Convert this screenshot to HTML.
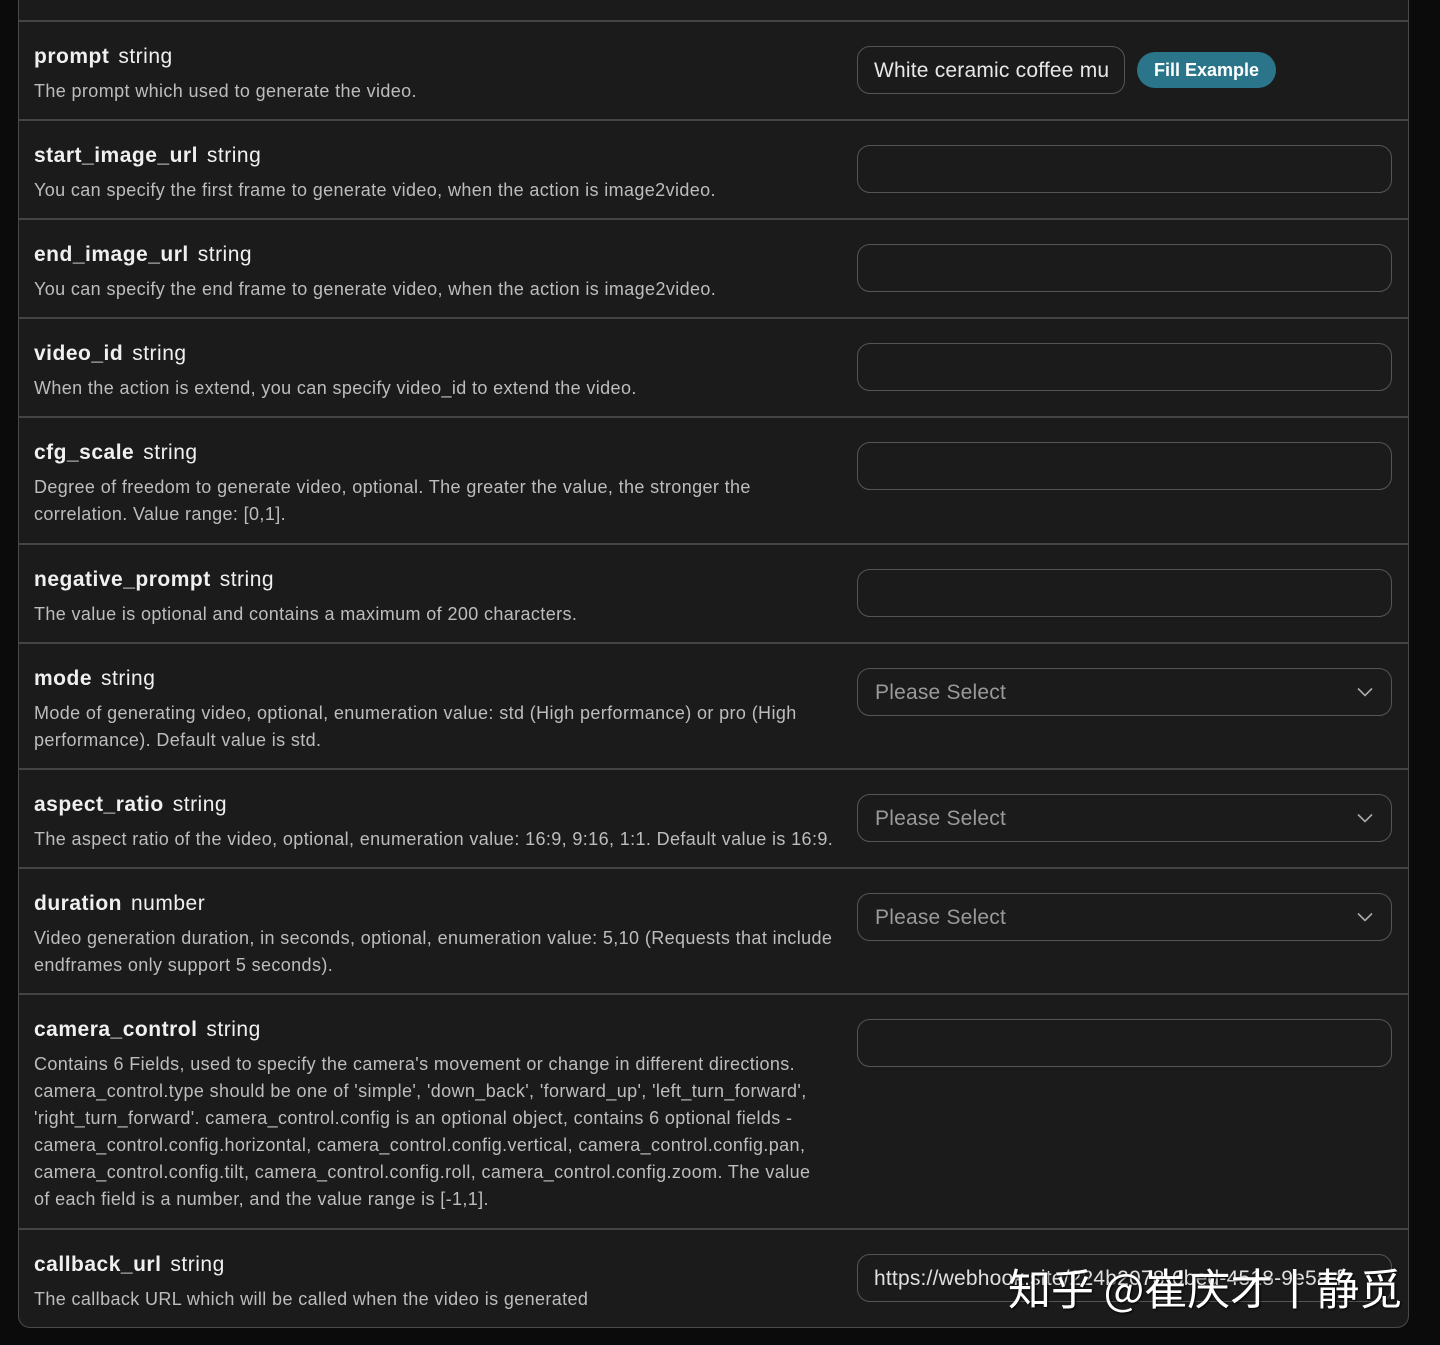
<!DOCTYPE html>
<html><head><meta charset="utf-8"><style>
*{box-sizing:border-box;margin:0;padding:0}
body{width:1440px;height:1345px;background:#0b0b0b;font-family:"Liberation Sans","Noto Sans CJK SC",sans-serif;overflow:hidden;position:relative}
.panel{position:absolute;left:18px;top:-12px;width:1391px;height:1340px;background:#1b1b1b;border:1.5px solid #4a4a4a;border-radius:12px;overflow:hidden}
.row{position:absolute;left:0;right:0;border-top:2px solid #444}
.name{position:absolute;left:15px;top:23px;font-size:21px;letter-spacing:0.5px;color:#f0f0f0;white-space:nowrap}
.name b{font-weight:700;margin-right:9px}
.desc{position:absolute;left:15px;top:56px;font-size:18px;letter-spacing:0.38px;line-height:27px;color:#bdbdbd;white-space:nowrap}
.inp{position:absolute;left:838px;top:24px;width:535px;height:48px;border:1.5px solid #555;border-radius:13px;font-size:21px;letter-spacing:0.2px;color:#9a9a9a;padding:12px 17px;white-space:nowrap;overflow:hidden}
.sel svg{position:absolute;right:18px;top:18px}
.btn{position:absolute;left:1118px;top:30px;width:139px;height:36px;border-radius:18px;background:#2a7589;color:#fff;font-weight:700;font-size:18px;text-align:center;line-height:36px}
</style></head><body>
<div class="panel">
<div class="row" style="top:31px;height:99px"><div class="name"><b>prompt</b>string</div><div class="desc">The prompt which used to generate the video.</div>
<div class="inp" style="width:268px;color:#e8e8e8;padding-left:16px;padding-right:14px"><div style="overflow:hidden;width:235px">White ceramic coffee mug</div></div><div class="btn">Fill Example</div></div>
<div class="row" style="top:130px"><div class="name"><b>start_image_url</b>string</div><div class="desc">You can specify the first frame to generate video, when the action is image2video.</div><div class="inp"></div></div>
<div class="row" style="top:229px"><div class="name"><b>end_image_url</b>string</div><div class="desc">You can specify the end frame to generate video, when the action is image2video.</div><div class="inp"></div></div>
<div class="row" style="top:328px"><div class="name"><b>video_id</b>string</div><div class="desc">When the action is extend, you can specify video_id to extend the video.</div><div class="inp"></div></div>
<div class="row" style="top:427px"><div class="name"><b>cfg_scale</b>string</div><div class="desc">Degree of freedom to generate video, optional. The greater the value, the stronger the<br>correlation. Value range: [0,1].</div><div class="inp"></div></div>
<div class="row" style="top:554px"><div class="name"><b>negative_prompt</b>string</div><div class="desc">The value is optional and contains a maximum of 200 characters.</div><div class="inp"></div></div>
<div class="row" style="top:653px"><div class="name"><b>mode</b>string</div><div class="desc">Mode of generating video, optional, enumeration value: std (High performance) or pro (High<br>performance). Default value is std.</div><div class="inp sel">Please Select<svg width="16" height="10" viewBox="0 0 16 10"><path d="M1 1.5L8 8.5L15 1.5" fill="none" stroke="#aaa" stroke-width="1.6"/></svg></div></div>
<div class="row" style="top:779px"><div class="name"><b>aspect_ratio</b>string</div><div class="desc">The aspect ratio of the video, optional, enumeration value: 16:9, 9:16, 1:1. Default value is 16:9.</div><div class="inp sel">Please Select<svg width="16" height="10" viewBox="0 0 16 10"><path d="M1 1.5L8 8.5L15 1.5" fill="none" stroke="#aaa" stroke-width="1.6"/></svg></div></div>
<div class="row" style="top:878px"><div class="name"><b>duration</b>number</div><div class="desc">Video generation duration, in seconds, optional, enumeration value: 5,10 (Requests that include<br>endframes only support 5 seconds).</div><div class="inp sel">Please Select<svg width="16" height="10" viewBox="0 0 16 10"><path d="M1 1.5L8 8.5L15 1.5" fill="none" stroke="#aaa" stroke-width="1.6"/></svg></div></div>
<div class="row" style="top:1004px"><div class="name"><b>camera_control</b>string</div><div class="desc">Contains 6 Fields, used to specify the camera's movement or change in different directions.<br>camera_control.type should be one of 'simple', 'down_back', 'forward_up', 'left_turn_forward',<br>'right_turn_forward'. camera_control.config is an optional object, contains 6 optional fields -<br>camera_control.config.horizontal, camera_control.config.vertical, camera_control.config.pan,<br>camera_control.config.tilt, camera_control.config.roll, camera_control.config.zoom. The value<br>of each field is a number, and the value range is [-1,1].</div><div class="inp"></div></div>
<div class="row" style="top:1239px;height:101px"><div class="name"><b>callback_url</b>string</div><div class="desc">The callback URL which will be called when the video is generated</div><div class="inp" style="color:#e0e0e0;padding-left:16px">https://webhook.site/224b2078-6bed-4518-9e5a-f</div></div>
</div>
<div style="position:absolute;left:1008px;top:1256px;font-size:43px;color:#fff;font-family:'Noto Sans CJK SC',sans-serif;white-space:nowrap;text-shadow:1px 1px 2px #000">知乎 @崔庆才丨静觅</div>
</body></html>
